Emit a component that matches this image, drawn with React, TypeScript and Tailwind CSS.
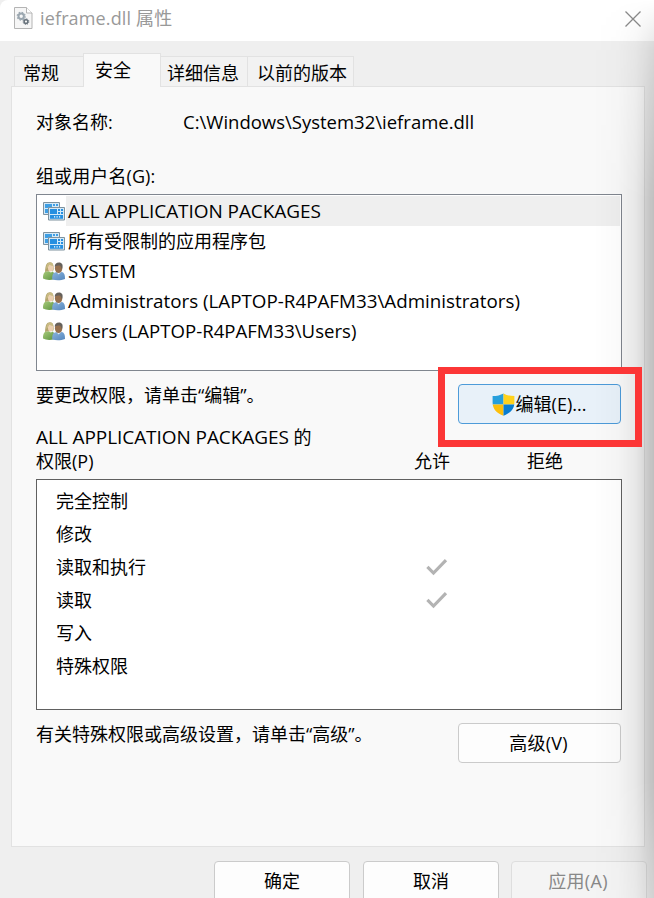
import React from "react";

function FileIcon() {
  return (
    <svg className="h-[23px] w-[19px] shrink-0" viewBox="0 0 19 23">
      <path d="M.5 .5H12.5L18 6V21.5H.5Z" fill="#f6f6f6" stroke="#b4b4b4" />
      <path d="M12.5 .5V6H18" fill="#fff" stroke="#b4b4b4" />
      <circle cx="7.2" cy="9.2" r="2.7" fill="none" stroke="#9ba7b0" strokeWidth="2" />
      <circle cx="7.2" cy="9.2" r="4" fill="none" stroke="#9ba7b0" strokeWidth="1.1" strokeDasharray="1.6 1.54" />
      <circle cx="12" cy="14.6" r="1.9" fill="none" stroke="#66717a" strokeWidth="1.5" />
      <circle cx="12" cy="14.6" r="2.9" fill="none" stroke="#66717a" strokeWidth="0.9" strokeDasharray="1.14 1.14" />
    </svg>
  );
}

function PackageIcon() {
  return (
    <svg className="h-[19px] w-[22px] shrink-0" viewBox="0 0 22 19">
      <path d="M.5 .5H16.5V12.5H.5Z" fill="#d3e9f8" stroke="#7f929e" />
      <path d="M2 2H9V6H2ZM10 2H12V4H10ZM13 2H15V4H13ZM2 7H5V11H2Z" fill="#3f9fe4" />
      <path d="M5.5 5.5H21.5V18H5.5Z" fill="#d3e9f8" stroke="#7f929e" />
      <path d="M7 7H14V12H7ZM15 7H17V9H15ZM18 7H20V9H18ZM15 10H17V12H15ZM18 10H20V12H18ZM7 13H20V16.7H7Z" fill="#268fe0" />
      <path d="M11 14.2H12.2V15.4H11ZM13.5 14.2H14.7V15.4H13.5ZM16 14.2H17.2V15.4H16Z" fill="#fff" />
    </svg>
  );
}

function UsersIcon() {
  return (
    <svg className="h-[19px] w-[22px] shrink-0" viewBox="0 0 22 19">
      <defs>
        <linearGradient id="woman" x1="0" y1="0" x2="1" y2="1">
          <stop stopColor="#a9ca7a" />
          <stop offset="1" stopColor="#5b9340" />
        </linearGradient>
        <linearGradient id="man" x1="0" y1="0" x2="1" y2="1">
          <stop stopColor="#8bb4dc" />
          <stop offset="1" stopColor="#5486bd" />
        </linearGradient>
      </defs>
      <path d="M2 10C2.4 3 3.5 .3 7 .3C10 .3 11 3 10.5 8.5Z" fill="#b3a46d" />
      <ellipse cx="7.6" cy="5.6" rx="2.7" ry="4" fill="#ecd0b1" />
      <path d="M3.2 7C3.2 2.5 5 .5 7.2 .5C9.4 .5 10 2.2 10.2 4C8 4 6.8 2.8 6.2 2.8C5.7 4.5 4.8 6 3.2 7Z" fill="#c9bb83" />
      <path d="M0 16.5C0 10.5 1.5 9.5 5.5 9.2L8 10.5L9.5 9.5C11 10 11.5 12 11.5 17C7 18.5 3 18 0 16.5Z" fill="url(#woman)" />
      <path d="M9.2 17.5C9 12 10.5 10.3 14 10L19 10C21.3 10.5 22 13 22 17C18 18.6 13 18.6 9.2 17.5Z" fill="url(#man)" />
      <path d="M13.3 9.8L15.5 12.5L18.7 9.7Z" fill="#e5edf5" />
      <ellipse cx="15.6" cy="6.2" rx="3.7" ry="4.9" fill="#96704e" />
      <path d="M11.8 5.2C11.5 2 13.2 .5 16 .5C19 .5 20.2 2.8 19.4 6L18.5 7C18.4 5 17.8 4 16.5 3.5C14.8 3.6 13.2 3.2 11.8 5.2Z" fill="#66615b" />
    </svg>
  );
}

function ShieldIcon() {
  return (
    <svg className="h-[23px] w-[23px] shrink-0" viewBox="0 0 23 23">
      <defs>
        <clipPath id="shield">
          <path d="M11.5 .4C8.5 2.1 5 3 .6 3V9.5C.6 16.3 4.8 20 11.5 22.8C18.2 20 22.4 16.3 22.4 9.5V3C18 3 14.5 2.1 11.5 .4Z" />
        </clipPath>
      </defs>
      <g clipPath="url(#shield)">
        <path d="M0 0H11.5V11.5H0Z" fill="#279fdc" />
        <path d="M11.5 0H23V11.5H11.5Z" fill="#ffd21c" />
        <path d="M0 11.5H11.5V23H0Z" fill="#fdbf0c" />
        <path d="M11.5 11.5H23V23H11.5Z" fill="#087ed3" />
      </g>
    </svg>
  );
}

function Check() {
  return (
    <svg className="h-[18px] w-[22px]" viewBox="0 0 22 18">
      <path d="M1.4 8.8L7.5 15L20 2.2" fill="none" stroke="#b3b3b3" strokeWidth="3.2" />
    </svg>
  );
}

const principals = [
  { name: "ALL APPLICATION PACKAGES", app: true, cls: "bg-[#efefef] text-[19px] tracking-[-0.07px]" },
  { name: "所有受限制的应用程序包", app: true, cls: "" },
  { name: "SYSTEM", app: false, cls: "text-[18.6px]" },
  { name: "Administrators (LAPTOP-R4PAFM33\\Administrators)", app: false, cls: "text-[18.8px]" },
  { name: "Users (LAPTOP-R4PAFM33\\Users)", app: false, cls: "text-[18.6px]" },
];

const permissions = [
  { name: "完全控制", allow: false },
  { name: "修改", allow: false },
  { name: "读取和执行", allow: true },
  { name: "读取", allow: true },
  { name: "写入", allow: false },
  { name: "特殊权限", allow: false },
];

export default function App() {
  return (
    <div className="relative flex h-[898px] w-[654px] flex-col overflow-hidden bg-[#efefef] font-['Open_Sans','Noto_Sans_CJK_SC',sans-serif] text-[18px] leading-6 whitespace-nowrap text-black">
      <header className="flex h-[41px] shrink-0 items-start rounded-tl-lg bg-white pt-[7px] pr-[13px] pl-[14px] text-[#999]">
        <FileIcon />
        <h1 className="-mt-px ml-[7px] flex-1 tracking-[0.14px]">ieframe.dll 属性</h1>
        <svg className="mt-1 h-4 w-4" viewBox="0 0 16 16">
          <path d="M.5 .5L15.5 15.5M15.5 .5L.5 15.5" stroke="#8a8a8a" strokeWidth="1.3" />
        </svg>
      </header>

      <nav className="z-10 -mb-px flex h-[46px] shrink-0 items-end pl-[14px]">
        <div className="h-[31px] w-[69px] border border-r-0 border-[#e2e2e2] bg-[#f2f2f2] pt-1 pl-2">常规</div>
        <div className="h-[34px] w-[78px] border border-b-0 border-[#e2e2e2] bg-[#f9f9f9] pt-1 pl-[11px]">安全</div>
        <div className="h-[31px] w-[87px] border border-l-0 border-[#e2e2e2] bg-[#f2f2f2] pt-1 pl-[6px]">详细信息</div>
        <div className="h-[31px] w-[106px] border border-l-0 border-[#e2e2e2] bg-[#f2f2f2] pt-1 pl-[9px]">以前的版本</div>
      </nav>

      <main className="ml-[11px] flex h-[761px] w-[634px] shrink-0 flex-col border border-[#e2e2e2] bg-[#f9f9f9] pt-[23px] pr-[22px] pl-6">
        <div className="flex h-6">
          <span className="w-[147px]">对象名称:</span>
          <span className="text-[18.5px]">C:\Windows\System32\ieframe.dll</span>
        </div>
        <div className="mt-[30px] h-6 tracking-[0.1px]">组或用户名(G):</div>
        <ul className="mt-[6px] h-[177px] w-[586px] shrink-0 border border-[#80868f] bg-white pt-px pr-px pl-[6px]">
          {principals.map((p) => (
            <li key={p.name} className="flex h-[30px] items-center">
              {p.app ? <PackageIcon /> : <UsersIcon />}
              <span className={`ml-px h-[30px] flex-1 pl-[2px] leading-[30px] ${p.cls}`}>{p.name}</span>
            </li>
          ))}
        </ul>
        <div className="mt-[13px] flex h-10 shrink-0 justify-between">
          <span className="-mt-px">要更改权限，请单击“编辑”。</span>
          <button className="mr-px flex h-10 w-[163px] items-center justify-center rounded-[4px] border border-[#4d9bd9] bg-[#e8f1f9] pr-px">
            <ShieldIcon />
            <span className="ml-px">编辑(E)...</span>
          </button>
        </div>
        <div className="mt-px h-6">
          <span className="text-[19px] tracking-[-0.07px]">ALL APPLICATION PACKAGES</span> 的
        </div>
        <div className="flex h-6">
          <span className="w-[378px]">权限(P)</span>
          <span className="w-[113px]">允许</span>
          <span>拒绝</span>
        </div>
        <ul className="mt-[6px] h-[231px] w-[586px] shrink-0 border border-[#606060] bg-white pt-1 pl-[19px]">
          {permissions.map((p) => (
            <li key={p.name} className="flex h-[33px] items-center">
              <span className="w-[370px]">{p.name}</span>
              {p.allow && <Check />}
            </li>
          ))}
        </ul>
        <div className="mt-[13px] flex h-10 shrink-0 justify-between">
          <span className="-mt-px">有关特殊权限或高级设置，请单击“高级”。</span>
          <button className="mr-px h-10 w-[163px] rounded-[4px] border border-[#cbcbcb] bg-[#fdfdfd] pr-[2px] tracking-[0.2px]">高级(V)</button>
        </div>
      </main>

      <footer className="mt-[14px] flex shrink-0 gap-[13px] pl-[214px]">
        <button className="h-[42px] w-[136px] rounded-[4px] border border-[#cbcbcb] bg-[#fdfdfd] pb-[2px]">确定</button>
        <button className="h-[42px] w-[136px] rounded-[4px] border border-[#cbcbcb] bg-[#fdfdfd] pb-[2px]">取消</button>
        <button className="-ml-px h-[42px] w-[136px] rounded-[4px] border border-[#dedede] bg-[#f4f4f4] pr-[2px] pb-[2px] tracking-[0.3px] text-[#888]">应用(A)</button>
      </footer>

      <div className="pointer-events-none absolute inset-y-0 right-0 z-20 w-[60px] bg-[linear-gradient(to_right,transparent,rgba(0,0,0,0.02)_40%,rgba(0,0,0,0.07)_70%,rgba(0,0,0,0.2))] [mask-image:linear-gradient(to_bottom,transparent,rgba(0,0,0,0.5)_50px,black_200px,black_780px,rgba(0,0,0,0.6))]" />
      <div className="pointer-events-none absolute top-[367px] left-[438px] z-30 h-20 w-[204px] border-[7px] border-[#fc3636]" />
    </div>
  );
}
